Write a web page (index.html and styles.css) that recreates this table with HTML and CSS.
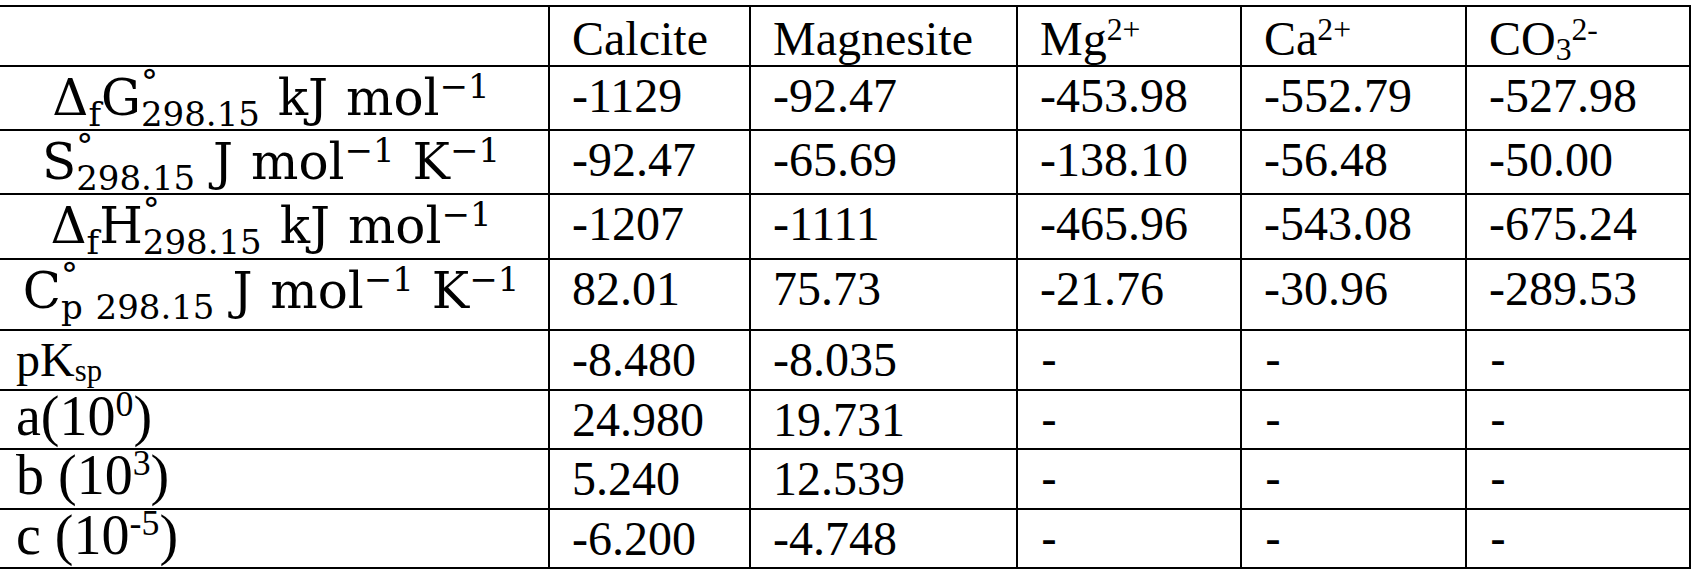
FILE: index.html
```html
<!DOCTYPE html>
<html lang="en">
<head>
<meta charset="utf-8">
<title>Thermodynamic data</title>
<link rel="stylesheet" href="styles.css">
</head>
<body>
<table class="data">
  <colgroup>
    <col class="c-label">
    <col class="c-calcite">
    <col class="c-mag">
    <col class="c-ion">
    <col class="c-ion2">
    <col class="c-ion">
  </colgroup>
  <tr class="r1">
    <td></td>
    <td class="head">Calcite</td>
    <td class="head">Magnesite</td>
    <td class="head">Mg<span class="up">2+</span></td>
    <td class="head">Ca<span class="up">2+</span></td>
    <td class="head">CO<span class="dn">3</span><span class="up">2-</span></td>
  </tr>
  <tr class="r2">
    <td class="math">Δ<span class="sb">f</span>G<span class="lim">298.15<span class="deg">°</span></span> kJ mol<span class="sp">−1</span></td>
    <td>-1129</td><td>-92.47</td><td>-453.98</td><td>-552.79</td><td>-527.98</td>
  </tr>
  <tr class="r3">
    <td class="math">S<span class="lim">298.15<span class="deg">°</span></span> J mol<span class="sp">−1</span> K<span class="sp">−1</span></td>
    <td>-92.47</td><td>-65.69</td><td>-138.10</td><td>-56.48</td><td>-50.00</td>
  </tr>
  <tr class="r4">
    <td class="math">Δ<span class="sb">f</span>H<span class="lim">298.15<span class="deg">°</span></span> kJ mol<span class="sp">−1</span></td>
    <td>-1207</td><td>-1111</td><td>-465.96</td><td>-543.08</td><td>-675.24</td>
  </tr>
  <tr class="r5">
    <td class="math">C<span class="lim">p 298.15<span class="deg">°</span></span> J mol<span class="sp">−1</span> K<span class="sp">−1</span></td>
    <td>82.01</td><td>75.73</td><td>-21.76</td><td>-30.96</td><td>-289.53</td>
  </tr>
  <tr class="r6">
    <td>pK<span class="small">sp</span></td>
    <td>-8.480</td><td>-8.035</td><td class="dash">-</td><td class="dash">-</td><td class="dash">-</td>
  </tr>
  <tr class="r7">
    <td class="coef">a(10<span class="up">0</span>)</td>
    <td>24.980</td><td>19.731</td><td class="dash">-</td><td class="dash">-</td><td class="dash">-</td>
  </tr>
  <tr class="r8">
    <td class="coef">b (10<span class="up">3</span>)</td>
    <td>5.240</td><td>12.539</td><td class="dash">-</td><td class="dash">-</td><td class="dash">-</td>
  </tr>
  <tr class="r9">
    <td class="coef">c (10<span class="up">-5</span>)</td>
    <td>-6.200</td><td>-4.748</td><td class="dash">-</td><td class="dash">-</td><td class="dash">-</td>
  </tr>
</table>
</body>
</html>
```

FILE: styles.css
```css
html, body {
  margin: 0;
  padding: 0;
  background: #ffffff;
}

.data {
  border-collapse: collapse;
  table-layout: fixed;
  width: 1697px;
  margin: 5px 0 0 -8px;
  font-family: "Liberation Serif", "Times New Roman", serif;
  font-size: 48px;
  color: #000000;
}

.c-label { width: 556px; }
.c-calcite { width: 201px; }
.c-mag { width: 267px; }
.c-ion { width: 224px; }
.c-ion2 { width: 225px; }

.data td {
  border: 2px solid #000000;
  padding: 2px 0 0 22px;
  vertical-align: top;
  line-height: 54px;
  white-space: nowrap;
}

.r1 { height: 60px; }
.r2 { height: 64px; }
.r3 { height: 64px; }
.r4 { height: 65px; }
.r5 { height: 71px; }
.r6 { height: 60px; }
.r7 { height: 59px; }
.r8 { height: 60px; }
.r9 { height: 59px; }

.data td.head {
  padding-top: 6px;
  line-height: 51px;
}

.data td.coef {
  font-size: 56px;
  line-height: 50px;
  padding-top: 0;
}

.data td.dash {
  font-family: "Liberation Sans", Arial, sans-serif;
  font-size: 48px;
  padding-left: 23px;
}

.up {
  font-size: 0.66em;
  line-height: 0;
  vertical-align: 0.48em;
}

.coef .up {
  font-size: 0.64em;
  vertical-align: 0.52em;
}

.dn {
  font-size: 0.66em;
  line-height: 0;
  vertical-align: -5px;
}

.small {
  font-size: 0.64em;
  line-height: 0;
  vertical-align: -5px;
}

.data td.math {
  font-family: "DejaVu Serif", serif;
  font-size: 50px;
  text-align: center;
  padding: 4px 0 0 0;
  line-height: 55px;
  word-spacing: 2px;
}

.sb {
  font-size: 0.68em;
  line-height: 0;
  vertical-align: -11px;
}

.lim {
  position: relative;
  font-size: 0.68em;
  line-height: 0;
  vertical-align: -11px;
}

.deg {
  position: absolute;
  left: 0;
  top: -22px;
  line-height: 0.6;
}

.sp {
  font-size: 0.68em;
  line-height: 0;
  vertical-align: 17px;
}
```
